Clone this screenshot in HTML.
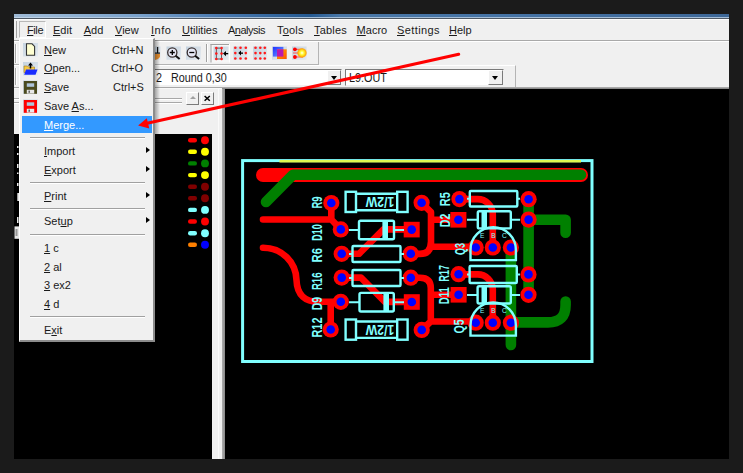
<!DOCTYPE html>
<html><head><meta charset="utf-8">
<style>
*{margin:0;padding:0;box-sizing:border-box}
html,body{width:743px;height:473px;overflow:hidden;background:#1b1b1b;font-family:"Liberation Sans",sans-serif;font-size:11px;color:#1a1a1a}
.a{position:absolute}
.t{position:absolute;line-height:11px;white-space:nowrap}
.u{text-decoration:underline;text-underline-offset:1px;text-decoration-thickness:1px}
</style></head><body>
<!-- window -->
<div class="a" style="left:14px;top:14px;width:715px;height:445px;background:#f0f0f0"></div>
<div class="a" style="left:14px;top:14px;width:715px;height:3px;background:linear-gradient(to right,#9fbad6 0px,#94b4d4 46px,#7aa2cc 126px,#4a7ab0 206px,#255a92 296px,#4a78a8 326px,#4674a6 486px,#3e6898 715px)"></div>
<div class="a" style="left:14px;top:17px;width:715px;height:1px;background:linear-gradient(to right,#c0d4e8,#a6bfd8 200px,#a6bfd8)"></div>
<div class="a" style="left:14px;top:18px;width:715px;height:1px;background:#4e5864"></div>
<div class="a" style="left:14px;top:19px;width:715px;height:1px;background:#fdfdfd"></div>
<div class="a" style="left:14px;top:40px;width:715px;height:1px;background:#a9a9a9"></div>
<div class="a" style="left:14px;top:41px;width:715px;height:1px;background:#ffffff"></div>

<!-- File button raised -->
<div class="a" style="left:19px;top:21px;width:27px;height:17px;border:1px solid;border-color:#b8b8b8 #fff #fff #b8b8b8"></div>
<div class="a" style="left:16px;top:21px;width:1px;height:17px;background:#a0a0a0"></div>

<!-- menubar text -->
<div class="t" style="left:27px;top:25.2px;letter-spacing:-0.4px"><span class="u">F</span>ile</div>
<div class="t" style="left:53px;top:25.2px"><span class="u">E</span>dit</div>
<div class="t" style="left:83.7px;top:25.2px"><span class="u">A</span>dd</div>
<div class="t" style="left:115px;top:25.2px"><span class="u">V</span>iew</div>
<div class="t" style="left:151px;top:25.2px;letter-spacing:0.5px"><span class="u">I</span>nfo</div>
<div class="t" style="left:182px;top:25.2px"><span class="u">U</span>tilities</div>
<div class="t" style="left:228px;top:25.2px;letter-spacing:-0.5px">A<span class="u">n</span>alysis</div>
<div class="t" style="left:277px;top:25.2px;letter-spacing:0.2px">T<span class="u">o</span>ols</div>
<div class="t" style="left:314px;top:25.2px;letter-spacing:0.2px"><span class="u">T</span>ables</div>
<div class="t" style="left:356.6px;top:25.2px"><span class="u">M</span>acro</div>
<div class="t" style="left:397px;top:25.2px;letter-spacing:0.4px"><span class="u">S</span>ettings</div>
<div class="t" style="left:449px;top:25.2px"><span class="u">H</span>elp</div>

<!-- toolbar 1 -->
<div class="a" style="left:14px;top:42px;width:305px;height:23px;border-right:1px solid #b4b4b4;border-bottom:1px solid #b4b4b4"></div>
<!-- toolbar 2 -->
<div class="a" style="left:14px;top:65px;width:502px;height:23px;border-top:1px solid #fff;border-right:1px solid #b4b4b4;border-bottom:1px solid #b4b4b4"></div>

<!-- toolbar icons -->
<svg class="a" style="left:0;top:0" width="743" height="473" viewBox="0 0 743 473">
<defs>
<linearGradient id="tbg" x1="0" y1="0" x2="1" y2="1"><stop offset="0" stop-color="#c3d1de"/><stop offset="1" stop-color="#e4eaf0"/></linearGradient>
<radialGradient id="sun"><stop offset="0" stop-color="#ffffff"/><stop offset="0.35" stop-color="#ffff40"/><stop offset="0.8" stop-color="#ffb000"/><stop offset="1" stop-color="#ff9000" stop-opacity="0.3"/></radialGradient>
<linearGradient id="blu" x1="0" y1="0" x2="1" y2="1"><stop offset="0" stop-color="#2030ff"/><stop offset="1" stop-color="#70a0ff"/></linearGradient>
<linearGradient id="org" x1="0" y1="0" x2="1" y2="1"><stop offset="0" stop-color="#ffb000"/><stop offset="1" stop-color="#ff5000"/></linearGradient>
</defs>
<rect x="155" y="46.5" width="5.5" height="13.3" fill="url(#tbg)"/>
<path d="M155,54 H160 V57 Q158,60 155,60 Z" fill="#e89030"/>
<rect x="157" y="47" width="1.2" height="6" fill="#111"/>
<rect x="155" y="52.5" width="5" height="1.2" fill="#111"/>
<rect x="166.5" y="46.5" width="14.5" height="13.3" fill="url(#tbg)"/>
<circle cx="172.3" cy="52.5" r="4.6" fill="#e6e8f5" stroke="#3a3030" stroke-width="1.3"/>
<path d="M175.6,55.8 L179.6,59" stroke="#111" stroke-width="2"/>
<path d="M169.8,52.5 H174.8 M172.3,50 V55" stroke="#000" stroke-width="1.3"/>
<rect x="186" y="46.5" width="14.8" height="13.3" fill="url(#tbg)"/>
<circle cx="191.8" cy="52.5" r="4.6" fill="#e6e8f5" stroke="#3a3030" stroke-width="1.3"/>
<path d="M195.1,55.8 L199.1,59" stroke="#111" stroke-width="2"/>
<path d="M189.3,52.5 H194.3" stroke="#000" stroke-width="1.3"/>
<rect x="206" y="44" width="1" height="18" fill="#a0a0a0"/>
<rect x="207" y="44" width="1" height="18" fill="#fff"/>
<!-- pressed button -->
<rect x="210.5" y="44" width="19" height="18.5" fill="#f7f7f7"/>
<rect x="210.5" y="44" width="19" height="1" fill="#a0a0a0"/>
<rect x="210.5" y="44" width="1" height="18.5" fill="#a0a0a0"/>
<rect x="229" y="44" width="1" height="18.5" fill="#fff"/>
<rect x="213.5" y="46.5" width="15" height="13.3" fill="url(#tbg)"/>
<rect x="216.3" y="48.1" width="5.3" height="10.9" fill="none" stroke="#444" stroke-width="0.8"/>
<g fill="#ff1a1a"><circle cx="216.3" cy="48.1" r="1.3"/><circle cx="221.6" cy="48.1" r="1.3"/><circle cx="216.3" cy="53.6" r="1.3"/><circle cx="221.6" cy="53.6" r="1.3"/><circle cx="216.3" cy="59" r="1.3"/><circle cx="221.6" cy="59" r="1.3"/></g>
<path d="M223,53.6 L226,51 V56.2 Z" fill="#000"/><rect x="225" y="53" width="3.2" height="1.3" fill="#000"/>
<rect x="233.3" y="46.5" width="14" height="13.3" fill="url(#tbg)"/>
<g fill="#ff1a1a"><circle cx="235.3" cy="47.8" r="1.3"/><circle cx="240.5" cy="47.8" r="1.3"/><circle cx="245.8" cy="47.8" r="1.3"/><circle cx="235.3" cy="53.1" r="1.3"/><circle cx="245.8" cy="53.1" r="1.3"/><circle cx="235.3" cy="58.5" r="1.3"/><circle cx="240.5" cy="58.5" r="1.3"/><circle cx="245.8" cy="58.5" r="1.3"/></g>
<path d="M238.3,53.1 L241,50.6 V55.6 Z" fill="#000"/><rect x="240" y="52.5" width="3" height="1.3" fill="#000"/>
<rect x="253" y="46.5" width="14" height="13.3" fill="url(#tbg)"/>
<g fill="#ff1a1a"><circle cx="255.5" cy="47.8" r="1.3"/><circle cx="260.3" cy="47.8" r="1.3"/><circle cx="264.8" cy="47.8" r="1.3"/><circle cx="255.5" cy="53.1" r="1.3"/><circle cx="260.3" cy="53.1" r="1.3"/><circle cx="264.8" cy="53.1" r="1.3"/><circle cx="255.5" cy="58.5" r="1.3"/><circle cx="260.3" cy="58.5" r="1.3"/><circle cx="264.8" cy="58.5" r="1.3"/></g>
<rect x="272" y="46.5" width="15" height="13.3" fill="url(#tbg)"/>
<rect x="272.9" y="46.9" width="10.5" height="9.7" fill="url(#blu)"/>
<rect x="277" y="49.3" width="9.7" height="9.7" fill="url(#org)"/>
<rect x="277" y="49.3" width="6.4" height="7.3" fill="#b818b0"/>
<rect x="292" y="46.5" width="14.6" height="13.3" fill="url(#tbg)"/>
<path d="M294.7,49.3 H303 M293,53 H300 M294.7,57 H303" stroke="#ff3030" stroke-width="0.8"/>
<circle cx="294.9" cy="49.3" r="1.9" fill="#ff0000"/>
<circle cx="294.9" cy="57" r="1.9" fill="#ff0000"/>
<circle cx="302" cy="52.9" r="5" fill="url(#sun)"/>
</svg>

<!-- grippers -->
<div class="a" style="left:15px;top:44px;width:1px;height:19px;background:#a8a8a8"></div>
<div class="a" style="left:16px;top:44px;width:1px;height:19px;background:#fff"></div>
<div class="a" style="left:15px;top:68px;width:1px;height:17px;background:#a8a8a8"></div>
<div class="a" style="left:16px;top:68px;width:1px;height:17px;background:#fff"></div>
<!-- combo 1 -->
<div class="a" style="left:100px;top:69px;width:242px;height:17px;background:#fff;border:1px solid;border-color:#7a7a7a #f0f0f0 #f0f0f0 #7a7a7a"></div>
<div class="t" style="left:155.5px;top:72px;font-size:12px;line-height:12px;transform:scaleX(0.9);transform-origin:0 0">2</div><div class="t" style="left:170.5px;top:72px;font-size:12px;line-height:12px;transform:scaleX(0.9);transform-origin:0 0">Round 0,30</div>
<div class="a" style="left:327px;top:70px;width:14px;height:15px;background:#f0f0f0;border:1px solid;border-color:#fff #7a7a7a #7a7a7a #fff"></div>
<div class="a" style="left:331px;top:76px;width:0;height:0;border-left:3.5px solid transparent;border-right:3.5px solid transparent;border-top:4px solid #000"></div>
<!-- combo 2 -->
<div class="a" style="left:345px;top:69px;width:159px;height:17px;background:#fff;border:1px solid;border-color:#7a7a7a #f0f0f0 #f0f0f0 #7a7a7a"></div>
<div class="t" style="left:348.5px;top:72px;font-size:12px;line-height:12px;transform:scaleX(0.9);transform-origin:0 0">L9:OUT</div>
<div class="a" style="left:488px;top:70px;width:15px;height:15px;background:#f0f0f0;border:1px solid;border-color:#fff #7a7a7a #7a7a7a #fff"></div>
<div class="a" style="left:492px;top:76px;width:0;height:0;border-left:3.5px solid transparent;border-right:3.5px solid transparent;border-top:4px solid #000"></div>

<!-- dark transition -->
<div class="a" style="left:14px;top:87px;width:715px;height:1px;background:#a8a8a8"></div><div class="a" style="left:14px;top:88px;width:715px;height:1px;background:#f8f8f8"></div><div class="a" style="left:222px;top:88px;width:507px;height:1px;background:#8c8c8c"></div>

<!-- canvas -->
<div class="a" style="left:225px;top:89px;width:504px;height:370px;background:#000"></div>
<!-- left panel -->
<div class="a" style="left:14px;top:89px;width:210px;height:370px;background:#f0f0f0"></div>
<div class="a" style="left:14px;top:134px;width:198px;height:325px;background:#000"></div>
<div class="a" style="left:222px;top:89px;width:3px;height:370px;background:linear-gradient(to right,#b0b0b0,#888)"></div><div class="a" style="left:218px;top:89px;width:1px;height:370px;background:#fafafa"></div>

<!-- panel title -->
<div class="a" style="left:14px;top:98px;width:168px;height:1px;background:#a8a8a8"></div>
<div class="a" style="left:14px;top:99px;width:168px;height:1px;background:#fff"></div>
<div class="a" style="left:14px;top:101.5px;width:168px;height:1px;background:#a8a8a8"></div>
<div class="a" style="left:14px;top:102.5px;width:168px;height:1px;background:#fff"></div>
<div class="a" style="left:186px;top:92px;width:13px;height:13px;background:#f0f0f0;border:1px solid;border-color:#fff #7a7a7a #7a7a7a #fff"></div>
<div class="a" style="left:190px;top:96px;width:0;height:0;border-left:3px solid transparent;border-right:3px solid transparent;border-bottom:3px solid #a0a0a0"></div>
<div class="a" style="left:201px;top:92px;width:13px;height:13px;background:#f0f0f0;border:1px solid;border-color:#fff #7a7a7a #7a7a7a #fff"></div>
<svg class="a" style="left:0;top:0" width="743" height="473"><path d="M204.6,96 L209.8,100.8 M209.8,96 L204.6,100.8" stroke="#000" stroke-width="1.5"/></svg>

<!-- panel dots -->
<svg class="a" style="left:0;top:0" width="743" height="473" viewBox="0 0 743 473">
<line x1="190.2" y1="140.2" x2="194.8" y2="140.2" stroke="#ff0000" stroke-width="4.4" stroke-linecap="round"/><circle cx="205" cy="140.2" r="3.95" fill="#ff0000"/>
<line x1="190.2" y1="151.8" x2="194.8" y2="151.8" stroke="#ffff00" stroke-width="4.4" stroke-linecap="round"/><circle cx="205" cy="151.8" r="3.95" fill="#ffff00"/>
<line x1="190.2" y1="163.4" x2="194.8" y2="163.4" stroke="#008000" stroke-width="4.4" stroke-linecap="round"/><circle cx="205" cy="163.4" r="3.95" fill="#008000"/>
<line x1="190.2" y1="175.1" x2="194.8" y2="175.1" stroke="#ffff00" stroke-width="4.4" stroke-linecap="round"/><circle cx="205" cy="175.1" r="3.95" fill="#ffff00"/>
<line x1="190.2" y1="186.7" x2="194.8" y2="186.7" stroke="#800000" stroke-width="4.4" stroke-linecap="round"/><circle cx="205" cy="186.7" r="3.95" fill="#800000"/>
<line x1="190.2" y1="198.3" x2="194.8" y2="198.3" stroke="#800000" stroke-width="4.4" stroke-linecap="round"/><circle cx="205" cy="198.3" r="3.95" fill="#800000"/>
<line x1="190.2" y1="209.9" x2="194.8" y2="209.9" stroke="#80ffff" stroke-width="4.4" stroke-linecap="round"/><circle cx="205" cy="209.9" r="3.95" fill="#80ffff"/>
<line x1="190.2" y1="221.5" x2="194.8" y2="221.5" stroke="#ff0000" stroke-width="4.4" stroke-linecap="round"/><circle cx="205" cy="221.5" r="3.95" fill="#ff0000"/>
<line x1="190.2" y1="233.2" x2="194.8" y2="233.2" stroke="#80ffff" stroke-width="4.4" stroke-linecap="round"/><circle cx="205" cy="233.2" r="3.95" fill="#80ffff"/>
<line x1="190.2" y1="244.8" x2="194.8" y2="244.8" stroke="#ff8000" stroke-width="4.4" stroke-linecap="round"/><circle cx="205" cy="244.8" r="3.95" fill="#0000ff"/>
<g fill="#e8e8e8"><rect x="17" y="146" width="1.5" height="2"/><rect x="17" y="153" width="1.5" height="2"/><rect x="17" y="164" width="1.5" height="4"/><rect x="17" y="172.5" width="1.5" height="1.5"/><rect x="17" y="183" width="1.5" height="3"/><rect x="17.3" y="193" width="2" height="8"/><rect x="17" y="217" width="1.5" height="6"/><rect x="14.5" y="226.4" width="4.8" height="12.4"/></g><rect x="15.5" y="229" width="2" height="7" fill="#999"/>
</svg>

<!-- PCB -->
<svg class="a" style="left:0;top:0" width="743" height="473" viewBox="0 0 743 473">
<g fill="none" stroke="#ff0000" stroke-linecap="round" stroke-linejoin="round">
<path d="M263,175 H581" stroke-width="14"/>
<g stroke-width="6.6">
<path d="M263,219.5 H331.3 M331.3,203 V219.5 L340.8,229.4"/>
<path d="M341.7,253.8 H359 L383.5,229.4 H411.7"/>
<path d="M341.7,277.6 H361 L385,301.9 H411.8"/>
<path d="M263,247.7 C282,247.7 296,262 296.5,280 C297,296 306,301.8 318,301.8 H340.8 M330.7,301.8 V329.5"/>
<path d="M421.6,202.8 L431,212.2 V246.8 H475.6 M431,219.8 H458.4 M410.7,253.9 H420 Q430.8,253.9 430.8,243"/>
<path d="M459.4,199.1 H477.5 A15.2,15.2 0 0 1 492.8,214.3 V247.5"/>
<path d="M410.7,277.7 H420 Q430.8,277.7 430.8,288 V321.5 H475.6 M430.8,294.8 H457.9 M430.8,321.5 L421.7,330"/>
<path d="M458.6,274.4 H477.5 A15.2,15.2 0 0 1 492.8,289.6 V322.9"/>
</g></g>
<g fill="none" stroke="#008000" stroke-width="10.6" stroke-linecap="round" stroke-linejoin="round">
<path d="M266,202 L293,174.8 H581"/>
<path d="M528.6,219.8 H565.6 V232.8"/>
<path d="M528.6,199.2 V294.8"/>
<path d="M510.9,247.5 V345"/>
<path d="M510.9,322.4 H548 Q565.6,322.4 565.6,305 V301.5"/>
</g>
<g fill="#ff0000">
<circle cx="331.3" cy="203" r="8.1"/>
<circle cx="340.8" cy="229.4" r="8.1"/>
<circle cx="341.7" cy="253.8" r="8.1"/>
<circle cx="341.7" cy="277.6" r="8.1"/>
<circle cx="340.8" cy="301.8" r="8.1"/>
<circle cx="330.7" cy="329.5" r="8.1"/>
<circle cx="421.6" cy="202.8" r="8.1"/>
<circle cx="410.8" cy="253.8" r="8.1"/>
<circle cx="410.8" cy="277.7" r="8.1"/>
<circle cx="421.7" cy="329.9" r="8.1"/>
<circle cx="459.4" cy="199.1" r="8.1"/>
<circle cx="528.6" cy="199.2" r="8.1"/>
<circle cx="528.6" cy="219.6" r="8.1"/>
<circle cx="475.7" cy="247.5" r="8.1"/>
<circle cx="492.8" cy="247.5" r="8.1"/>
<circle cx="510.9" cy="247.5" r="8.1"/>
<circle cx="458.6" cy="274.2" r="8.1"/>
<circle cx="528.5" cy="274.4" r="8.1"/>
<circle cx="528.5" cy="294.8" r="8.1"/>
<circle cx="475.7" cy="322.7" r="8.1"/>
<circle cx="492.8" cy="322.7" r="8.1"/>
<circle cx="510.9" cy="322.7" r="8.1"/>
<rect x="403.7" y="221.79999999999998" width="16" height="15.6"/>
<rect x="403.8" y="294.2" width="16" height="15.6"/>
<rect x="450.4" y="212.0" width="16" height="15.6"/>
<rect x="450.6" y="287.0" width="16" height="15.6"/>
</g>
<g fill="#0000ff">
<circle cx="331.3" cy="203" r="4.3"/>
<circle cx="340.8" cy="229.4" r="4.3"/>
<circle cx="341.7" cy="253.8" r="4.3"/>
<circle cx="341.7" cy="277.6" r="4.3"/>
<circle cx="340.8" cy="301.8" r="4.3"/>
<circle cx="330.7" cy="329.5" r="4.3"/>
<circle cx="421.6" cy="202.8" r="4.3"/>
<circle cx="410.8" cy="253.8" r="4.3"/>
<circle cx="410.8" cy="277.7" r="4.3"/>
<circle cx="421.7" cy="329.9" r="4.3"/>
<circle cx="459.4" cy="199.1" r="4.3"/>
<circle cx="528.6" cy="199.2" r="4.3"/>
<circle cx="528.6" cy="219.6" r="4.3"/>
<circle cx="475.7" cy="247.5" r="4.3"/>
<circle cx="492.8" cy="247.5" r="4.3"/>
<circle cx="510.9" cy="247.5" r="4.3"/>
<circle cx="458.6" cy="274.2" r="4.3"/>
<circle cx="528.5" cy="274.4" r="4.3"/>
<circle cx="528.5" cy="294.8" r="4.3"/>
<circle cx="475.7" cy="322.7" r="4.3"/>
<circle cx="492.8" cy="322.7" r="4.3"/>
<circle cx="510.9" cy="322.7" r="4.3"/>
<circle cx="411.7" cy="229.6" r="4.3"/>
<circle cx="411.8" cy="302" r="4.3"/>
<circle cx="458.4" cy="219.8" r="4.3"/>
<circle cx="458.6" cy="294.8" r="4.3"/>
</g>
<g fill="none" stroke="#80ffff" stroke-width="2.5">
<rect x="242.6" y="160.6" width="349.4" height="200.9" stroke-width="3"/>
</g>
<path d="M279.5,161.2 H581" stroke="#e0f850" stroke-width="2.4"/>
<g fill="none" stroke="#80ffff" stroke-width="2.4">
<rect x="345.6" y="191.8" width="10.4" height="20.2"/>
<rect x="397.2" y="191.8" width="10.4" height="20.2"/>
<path d="M356,193.8 H397.2 M356,210.2 H397.2"/>
<rect x="345.6" y="319.5" width="10.4" height="20.2"/>
<rect x="397.2" y="319.5" width="10.4" height="20.2"/>
<path d="M356,321.5 H397.2 M356,337.9 H397.2"/>
<rect x="359" y="220.7" width="35" height="18.6" rx="1.5"/>
<path d="M349,230 H359 M394,230 H404" stroke-width="2"/>
<rect x="382.4" y="220.7" width="5.600000000000023" height="18.6" fill="#80ffff" stroke="none"/>
<rect x="359.5" y="292.9" width="34.30000000000001" height="18.6" rx="1.5"/>
<path d="M349,302.2 H359.5 M393.8,302.2 H404" stroke-width="2"/>
<rect x="383.4" y="292.9" width="5.600000000000023" height="18.6" fill="#80ffff" stroke="none"/>
<rect x="352.5" y="246" width="48.0" height="16" rx="1"/>
<path d="M349,254.0 H352.5 M400.5,254.0 H404" stroke-width="2"/>
<rect x="352.5" y="270" width="48.0" height="16" rx="1"/>
<path d="M349,278.0 H352.5 M400.5,278.0 H404" stroke-width="2"/>
<rect x="469.8" y="191" width="47.49999999999994" height="15.5" rx="1"/>
<path d="M467,198.75 H469.8 M517.3,198.75 H520" stroke-width="2"/>
<rect x="469.6" y="266" width="47.19999999999993" height="17" rx="1"/>
<path d="M467,274.5 H469.6 M516.8,274.5 H520" stroke-width="2"/>
<rect x="477.8" y="211.20000000000002" width="33.0" height="17.2" rx="1.5"/>
<path d="M467,219.8 H477.8 M510.8,219.8 H520" stroke-width="2"/>
<rect x="481.5" y="211.20000000000002" width="5.5" height="17.2" fill="#80ffff" stroke="none"/>
<rect x="477.6" y="286.29999999999995" width="33.19999999999999" height="17.2" rx="1.5"/>
<path d="M467,294.9 H477.6 M510.8,294.9 H520" stroke-width="2"/>
<rect x="481.5" y="286.29999999999995" width="5.5" height="17.2" fill="#80ffff" stroke="none"/>
<path d="M470.5,260.1 V250.0 A22.7,22.7 0 0 1 515.9,250.0 V260.1 Z" rx="2"/>
<path d="M470.5,335.6 V325.2 A22.7,22.7 0 0 1 515.9,325.2 V335.6 Z" rx="2"/>
</g>
<text transform="translate(317,202.5) rotate(-90)" x="0" y="0" text-anchor="middle" dominant-baseline="central" font-family="Liberation Sans" font-weight="bold" font-size="14.5" textLength="12" lengthAdjust="spacingAndGlyphs" fill="#80ffff">R9</text>
<text transform="translate(317,232.5) rotate(-90)" x="0" y="0" text-anchor="middle" dominant-baseline="central" font-family="Liberation Sans" font-weight="bold" font-size="14.5" textLength="16.5" lengthAdjust="spacingAndGlyphs" fill="#80ffff">D10</text>
<text transform="translate(317.2,255.3) rotate(-90)" x="0" y="0" text-anchor="middle" dominant-baseline="central" font-family="Liberation Sans" font-weight="bold" font-size="14.5" textLength="14.4" lengthAdjust="spacingAndGlyphs" fill="#80ffff">R6</text>
<text transform="translate(317.2,281.3) rotate(-90)" x="0" y="0" text-anchor="middle" dominant-baseline="central" font-family="Liberation Sans" font-weight="bold" font-size="14.5" textLength="17.5" lengthAdjust="spacingAndGlyphs" fill="#80ffff">R16</text>
<text transform="translate(317.2,303.5) rotate(-90)" x="0" y="0" text-anchor="middle" dominant-baseline="central" font-family="Liberation Sans" font-weight="bold" font-size="14.5" textLength="13.3" lengthAdjust="spacingAndGlyphs" fill="#80ffff">D9</text>
<text transform="translate(317.2,327.5) rotate(-90)" x="0" y="0" text-anchor="middle" dominant-baseline="central" font-family="Liberation Sans" font-weight="bold" font-size="14.5" textLength="20" lengthAdjust="spacingAndGlyphs" fill="#80ffff">R12</text>
<text transform="translate(445,199.2) rotate(-90)" x="0" y="0" text-anchor="middle" dominant-baseline="central" font-family="Liberation Sans" font-weight="bold" font-size="14.5" textLength="14" lengthAdjust="spacingAndGlyphs" fill="#80ffff">R5</text>
<text transform="translate(445,220.4) rotate(-90)" x="0" y="0" text-anchor="middle" dominant-baseline="central" font-family="Liberation Sans" font-weight="bold" font-size="14.5" textLength="13.5" lengthAdjust="spacingAndGlyphs" fill="#80ffff">D2</text>
<text transform="translate(459.5,249) rotate(-90)" x="0" y="0" text-anchor="middle" dominant-baseline="central" font-family="Liberation Sans" font-weight="bold" font-size="14.5" textLength="12" lengthAdjust="spacingAndGlyphs" fill="#80ffff">Q3</text>
<text transform="translate(444.3,273.3) rotate(-90)" x="0" y="0" text-anchor="middle" dominant-baseline="central" font-family="Liberation Sans" font-weight="bold" font-size="14.5" textLength="16.2" lengthAdjust="spacingAndGlyphs" fill="#80ffff">R17</text>
<text transform="translate(444.3,295.6) rotate(-90)" x="0" y="0" text-anchor="middle" dominant-baseline="central" font-family="Liberation Sans" font-weight="bold" font-size="14.5" textLength="17.2" lengthAdjust="spacingAndGlyphs" fill="#80ffff">D11</text>
<text transform="translate(459,326.5) rotate(-90)" x="0" y="0" text-anchor="middle" dominant-baseline="central" font-family="Liberation Sans" font-weight="bold" font-size="14.5" textLength="14.2" lengthAdjust="spacingAndGlyphs" fill="#80ffff">Q5</text>
<text transform="translate(380,202.4) rotate(180)" x="0" y="0" text-anchor="middle" dominant-baseline="central" font-family="Liberation Sans" font-weight="bold" font-size="15.5" textLength="28.6" lengthAdjust="spacingAndGlyphs" fill="#80ffff">1/2W</text>
<text transform="translate(380,330.1) rotate(180)" x="0" y="0" text-anchor="middle" dominant-baseline="central" font-family="Liberation Sans" font-weight="bold" font-size="15.5" textLength="28.6" lengthAdjust="spacingAndGlyphs" fill="#80ffff">1/2W</text>
<text x="482.2" y="235.4" text-anchor="middle" dominant-baseline="central" font-family="Liberation Sans" font-size="6.5" fill="#80ffff">E</text>
<text x="493.3" y="235.4" text-anchor="middle" dominant-baseline="central" font-family="Liberation Sans" font-size="6.5" fill="#80ffff">B</text>
<text x="504.4" y="235.4" text-anchor="middle" dominant-baseline="central" font-family="Liberation Sans" font-size="6.5" fill="#80ffff">C</text>
<text x="482.2" y="310.5" text-anchor="middle" dominant-baseline="central" font-family="Liberation Sans" font-size="6.5" fill="#80ffff">E</text>
<text x="493.3" y="310.5" text-anchor="middle" dominant-baseline="central" font-family="Liberation Sans" font-size="6.5" fill="#80ffff">B</text>
<text x="504.4" y="310.5" text-anchor="middle" dominant-baseline="central" font-family="Liberation Sans" font-size="6.5" fill="#80ffff">C</text>
</svg>

<!-- menu -->
<div class="a" style="left:154px;top:40px;width:6px;height:302px;background:linear-gradient(to right,rgba(0,0,0,0.38),rgba(0,0,0,0))"></div>
<div class="a" style="left:19px;top:38px;width:136px;height:304px;background:#f0f0f0;border-style:solid;border-width:1px 2px 2px 1.5px;border-color:#fff #8c8c8c #8c8c8c #fff"></div>

<!-- menu icons -->
<svg class="a" style="left:0;top:0" width="743" height="473" viewBox="0 0 743 473">
<defs>
<linearGradient id="ibg" x1="0" y1="0" x2="1" y2="1"><stop offset="0" stop-color="#c5d3e0"/><stop offset="1" stop-color="#e6ecf2"/></linearGradient>
</defs>
<rect x="23" y="43" width="15" height="13.5" fill="url(#ibg)"/>
<path d="M26.5,43.8 H32 L34.6,46.4 V55.2 H26.5 Z" fill="#ffffd2" stroke="#333" stroke-width="1.1"/>
<rect x="23" y="62" width="15" height="13.5" fill="url(#ibg)"/>
<path d="M24,66 H27.5 L28.5,67 H34.5 V72.5 H24 Z" fill="#f7c843" stroke="#9a7a20" stroke-width="0.6"/>
<path d="M26,69.5 H37.5 L35.5,74.8 H24.2 Z" fill="#1a2cff"/>
<path d="M30.5,68.5 V64" stroke="#000" stroke-width="1.5"/>
<path d="M28,65.5 L30.5,62.6 L33,65.5 Z" fill="#000"/>
<rect x="23" y="80.5" width="15" height="13.5" fill="url(#ibg)"/>
<rect x="23.8" y="81" width="13.2" height="12.8" fill="#4a4a1e"/>
<rect x="26.8" y="83.3" width="7.4" height="3.5" fill="#aec4da"/>
<rect x="26.8" y="89.8" width="7.4" height="3.8" fill="#e8e8e8"/>
<rect x="28.5" y="90.6" width="1.4" height="2.2" fill="#555"/>
<rect x="23" y="99.5" width="15" height="13.5" fill="url(#ibg)"/>
<rect x="23.8" y="100" width="13.2" height="12.8" fill="#ff0000"/>
<rect x="26.8" y="102.3" width="7.4" height="3.5" fill="#aec4da"/>
<rect x="26.8" y="108.8" width="7.4" height="3.8" fill="#e8e8e8"/>
<rect x="28.5" y="109.6" width="1.4" height="2.2" fill="#555"/>
</svg>

<!-- menu items -->
<div class="a" style="left:21.7px;top:116.2px;width:130.5px;height:17px;background:#3399ff"></div>
<div class="t" style="left:44px;top:44.5px"><span class="u">N</span>ew</div>
<div class="t" style="left:112px;top:44.5px">Ctrl+N</div>
<div class="t" style="left:44px;top:63.2px"><span class="u">O</span>pen...</div>
<div class="t" style="left:111px;top:63.2px">Ctrl+O</div>
<div class="t" style="left:44px;top:82px"><span class="u">S</span>ave</div>
<div class="t" style="left:113px;top:82px">Ctrl+S</div>
<div class="t" style="left:44px;top:101px">Save <span class="u">A</span>s...</div>
<div class="t" style="left:44px;top:119.6px;color:#fff"><span class="u">M</span>erge...</div>
<div class="a" style="left:30px;top:137px;width:115px;height:1px;background:#a0a0a0"></div>
<div class="a" style="left:30px;top:138px;width:115px;height:1px;background:#fff"></div>
<div class="t" style="left:44px;top:146px"><span class="u">I</span>mport</div>
<div class="t" style="left:44px;top:164.5px"><span class="u">E</span>xport</div>
<div class="a" style="left:30px;top:182px;width:115px;height:1px;background:#a0a0a0"></div>
<div class="a" style="left:30px;top:183px;width:115px;height:1px;background:#fff"></div>
<div class="t" style="left:44px;top:191px"><span class="u">P</span>rint</div>
<div class="a" style="left:30px;top:208px;width:115px;height:1px;background:#a0a0a0"></div>
<div class="a" style="left:30px;top:209px;width:115px;height:1px;background:#fff"></div>
<div class="t" style="left:44px;top:216px">Set<span class="u">u</span>p</div>
<div class="a" style="left:30px;top:234px;width:115px;height:1px;background:#a0a0a0"></div>
<div class="a" style="left:30px;top:235px;width:115px;height:1px;background:#fff"></div>
<div class="t" style="left:44px;top:242.5px"><span class="u">1</span> c</div>
<div class="t" style="left:44px;top:261.5px"><span class="u">2</span> al</div>
<div class="t" style="left:44px;top:280.2px"><span class="u">3</span> ex2</div>
<div class="t" style="left:44px;top:299px"><span class="u">4</span> d</div>
<div class="a" style="left:30px;top:316px;width:115px;height:1px;background:#a0a0a0"></div>
<div class="a" style="left:30px;top:317px;width:115px;height:1px;background:#fff"></div>
<div class="t" style="left:44px;top:324.5px">E<span class="u">x</span>it</div>
<div class="a" style="left:146px;top:147.0px;width:0;height:0;border-top:3.5px solid transparent;border-bottom:3.5px solid transparent;border-left:4px solid #000"></div>
<div class="a" style="left:146px;top:165.5px;width:0;height:0;border-top:3.5px solid transparent;border-bottom:3.5px solid transparent;border-left:4px solid #000"></div>
<div class="a" style="left:146px;top:191.5px;width:0;height:0;border-top:3.5px solid transparent;border-bottom:3.5px solid transparent;border-left:4px solid #000"></div>
<div class="a" style="left:146px;top:217.0px;width:0;height:0;border-top:3.5px solid transparent;border-bottom:3.5px solid transparent;border-left:4px solid #000"></div>

<!-- arrow -->
<svg class="a" style="left:0;top:0" width="743" height="473" viewBox="0 0 743 473">
<line x1="458.7" y1="54.3" x2="146" y2="123.5" stroke="#ff0000" stroke-width="3" stroke-linecap="round"/>
<polygon points="138.1,125.4 146.8,118.2 149.3,128.5" fill="#ff0000"/>
</svg>
</body></html>
